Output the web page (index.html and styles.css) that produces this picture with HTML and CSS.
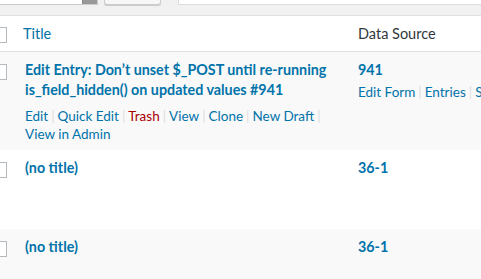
FILE: index.html
```html
<!DOCTYPE html>
<html lang="en">
<head>
    <meta charset="UTF-8">
    <meta name="viewport" content="width=device-width, initial-scale=1.0">
    <title>Entries</title>
    <link rel="stylesheet" href="styles.css">
</head>
<body>

<div class="tablenav">
    <div class="select"><span class="arrow"></span></div>
    <div class="button"></div>
    <div class="search"></div>
</div>

<table class="list">
    <colgroup>
        <col class="c-check">
        <col class="c-title">
        <col class="c-source">
    </colgroup>
    <thead>
        <tr>
            <td class="check"><span class="box"></span></td>
            <th class="col-title"><a href="#">Title</a></th>
            <th class="col-source">Data Source</th>
        </tr>
    </thead>
    <tbody>
        <tr class="alt row-tall">
            <td class="check"><span class="box"></span></td>
            <td class="col-title">
                <a class="row-title" href="#">Edit Entry: Don’t unset $_POST until re-running is_field_hidden() on updated values #941</a>
                <div class="row-actions">
                    <a href="#">Edit</a><span class="sep">|</span><a href="#">Quick Edit</a><span class="sep">|</span><a class="trash" href="#">Trash</a><span class="sep">|</span><a href="#">View</a><span class="sep">|</span><a href="#">Clone</a><span class="sep">|</span><a href="#">New&nbsp;Draft</a><span class="sep">|</span>
                    <a href="#">View in Admin</a>
                </div>
            </td>
            <td class="col-source">
                <a class="row-title" href="#">941</a>
                <div class="row-actions source-actions">
                    <a href="#">Edit Form</a><span class="sep">|</span><a href="#">Entries</a><span class="sep">|</span><a href="#">Settings</a>
                </div>
            </td>
        </tr>
        <tr class="row-short">
            <td class="check"><span class="box"></span></td>
            <td class="col-title"><a class="row-title" href="#">(no title)</a></td>
            <td class="col-source"><a class="row-title" href="#">36-1</a></td>
        </tr>
        <tr class="alt row-short">
            <td class="check"><span class="box"></span></td>
            <td class="col-title"><a class="row-title" href="#">(no title)</a></td>
            <td class="col-source"><a class="row-title" href="#">36-1</a></td>
        </tr>
    </tbody>
</table>

</body>
</html>
```

FILE: styles.css
```css
body {
    margin: 0;
    font-family: Lato, sans-serif;
    font-size: 13.5px;
    color: #32373c;
    background: #f1f1f1;
    overflow: hidden;
}
a {
    color: #0073aa;
    text-decoration: none;
}
.tablenav {
    display: flex;
    height: 15px;
    align-items: flex-end;
}
.tablenav > div {
    height: 26px;
    margin-bottom: 10px;
    background: #fff;
    border: 1px solid #ccc;
    box-sizing: border-box;
}
.select {
    width: 110px;
    margin-left: -12px;
    display: flex;
    justify-content: flex-end;
}
.select .arrow {
    width: 14px;
    background: #999;
    border-left: 1px solid #888;
}
.button {
    width: 57px;
    margin-left: 6px;
    border-radius: 3px;
    background: #f7f7f7 !important;
    box-shadow: 0 1px 0 #ccc;
}
.search {
    flex: 1;
    margin-left: 17px;
    margin-right: -10px;
    border-color: #ddd !important;
}
.list {
    width: 520px;
    table-layout: fixed;
    margin-left: -16px;
    border-collapse: collapse;
    border-top: 1px solid #e1e1e1;
    background: #fff;
}
.c-check {
    width: 39px;
}
.c-title {
    width: 335px;
}
.list th, .list td {
    vertical-align: top;
    text-align: left;
    padding: 0;
}
thead th, thead td {
    height: 35px;
    border-bottom: 1px solid #e1e1e1;
    font-weight: normal;
    font-size: 14.5px;
    line-height: 20px;
}
thead th {
    padding-top: 8px !important;
    box-sizing: border-box;
}
.check {
    padding-left: 7px !important;
}
.box {
    display: block;
    width: 16px;
    height: 16px;
    border: 1px solid #b4b9be;
    box-sizing: border-box;
    background: #fff;
}
thead .box {
    margin-top: 11px;
}
tbody .box {
    margin-top: 12px;
}
tbody .col-title {
    padding-left: 2px !important;
    padding-right: 2px !important;
}
.alt {
    background: #f9f9f9;
}
.row-title {
    display: block;
    font-weight: bold;
    font-size: 14.3px;
    line-height: 20px;
    margin-top: 8px;
}
.row-actions {
    margin-top: 7px;
    line-height: 18px;
}
.row-actions .sep {
    color: #ddd;
    padding: 0 3px;
}
.row-actions .trash {
    color: #a00;
}
.source-actions {
    margin-top: 3px;
    white-space: nowrap;
}
.row-tall td {
    height: 98px;
}
.row-short td {
    height: 79px;
}
```
